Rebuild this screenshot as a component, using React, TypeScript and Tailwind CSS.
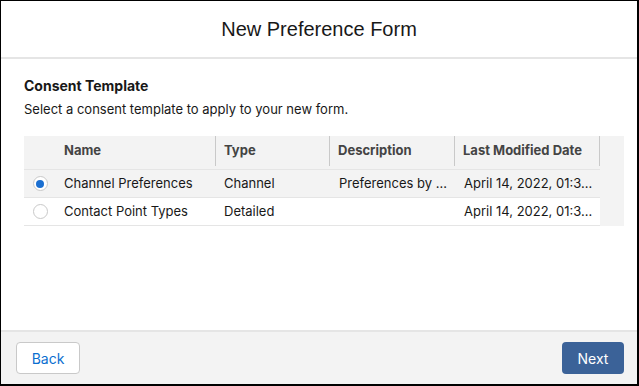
import React from 'react';

const rows = [
  { name: 'Channel Preferences', type: 'Channel', description: 'Preferences by ...', date: 'April 14, 2022, 01:3...', selected: true },
  { name: 'Contact Point Types', type: 'Detailed', description: '', date: 'April 14, 2022, 01:3...', selected: false },
];

const cols = 'grid grid-cols-[32px_160px_114px_125px_145px]';

const Radio = ({ checked }: { checked: boolean }) => (
  <span className="flex h-[15px] w-[15px] items-center justify-center rounded-full border border-[#c9c9c9] bg-white">
    {checked && <span className="h-[8px] w-[8px] rounded-full bg-[#1b6fd1]" />}
  </span>
);

export default function App() {
  return (
    <div className="flex h-[386px] w-[639px] flex-col border-t border-l border-r-2 border-b-2 border-black bg-white font-['Inter',sans-serif] text-[#181818]">
      {/* header */}
      <div className="flex h-[58px] items-center justify-center border-b-2 border-[#e5e5e5]">
        <h1 className="font-['Liberation_Sans',Arial,sans-serif] text-[20px] font-normal">New Preference Form</h1>
      </div>

      {/* body */}
      <div className="flex-1 px-[23px] pt-[17px]">
        <h2 className="text-[14px] font-bold leading-[20px]">Consent Template</h2>
        <p className="mt-[4px] text-[13px] leading-[18px]">Select a consent template to apply to your new form.</p>

        <div className="mt-[18px] w-[600px] bg-[#f3f3f3]">
          <div className="w-[576px] text-[13px]">
            <div className={`${cols} h-[34px] border-b border-[#e5e5e5] bg-[#f3f3f3] pb-[3px] font-bold text-[#444]`}>
              <div />
              <div className="flex items-center border-r border-[#c9c9c9] pl-[8px]">Name</div>
              <div className="flex items-center border-r border-[#c9c9c9] pl-[8px]">Type</div>
              <div className="flex items-center border-r border-[#c9c9c9] pl-[8px]">Description</div>
              <div className="flex items-center border-r border-[#c9c9c9] pl-[8px]">Last Modified Date</div>
            </div>
            {rows.map((r) => (
              <div
                key={r.name}
                className={`${cols} h-[28px] border-b border-[#e5e5e5] ${r.selected ? 'bg-[#f3f3f3]' : 'bg-white'}`}
              >
                <div className="flex items-center justify-center">
                  <Radio checked={r.selected} />
                </div>
                <div className="flex items-center overflow-hidden whitespace-nowrap pl-[8px]">{r.name}</div>
                <div className="flex items-center overflow-hidden whitespace-nowrap pl-[8px]">{r.type}</div>
                <div className="flex items-center overflow-hidden whitespace-nowrap pl-[9px]">{r.description}</div>
                <div className="flex items-center overflow-hidden whitespace-nowrap pl-[9px]">{r.date}</div>
              </div>
            ))}
          </div>
        </div>
      </div>

      {/* footer */}
      <div className="flex h-[54px] items-center justify-between border-t-2 border-[#e5e5e5] bg-[#f3f3f3] pl-[15px] pr-[13px]">
        <button className="h-[32px] w-[64px] rounded-[4px] border border-[#c9c9c9] bg-white text-[14px] text-[#0b6fd0]">
          Back
        </button>
        <button className="h-[32px] w-[62px] rounded-[4px] bg-[#3b6298] text-[14px] text-white">
          Next
        </button>
      </div>
    </div>
  );
}
